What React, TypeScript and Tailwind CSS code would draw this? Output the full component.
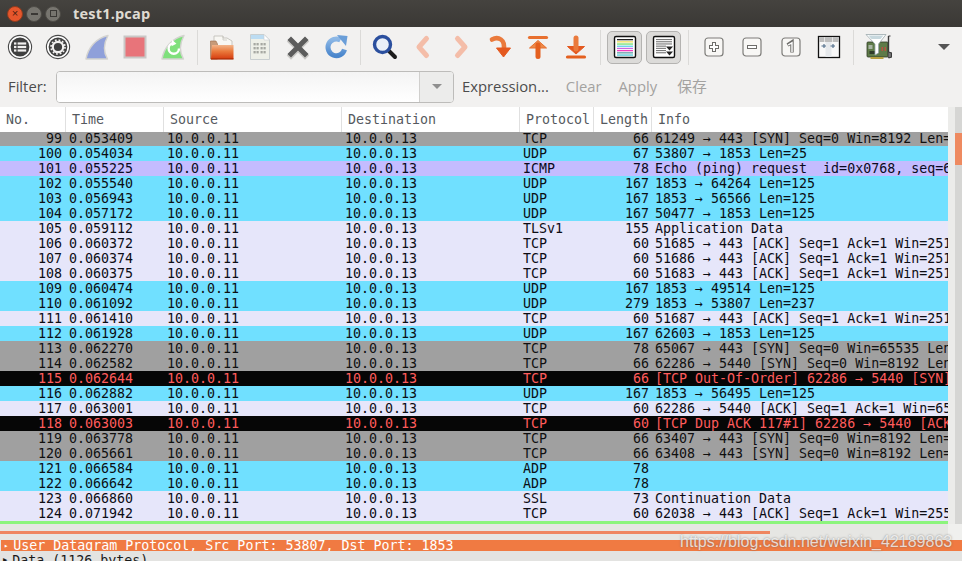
import React from "react";

type Kind = "grey" | "blue" | "purple" | "lav" | "black";
const rows: [number, string, string, number, string, Kind][] = [
  [99, "0.053409", "TCP", 66, "61249 → 443 [SYN] Seq=0 Win=8192 Len=4", "grey"],
  [100, "0.054034", "UDP", 67, "53807 → 1853 Len=25", "blue"],
  [101, "0.055225", "ICMP", 78, "Echo (ping) request  id=0x0768, seq=6", "purple"],
  [102, "0.055540", "UDP", 167, "1853 → 64264 Len=125", "blue"],
  [103, "0.056943", "UDP", 167, "1853 → 56566 Len=125", "blue"],
  [104, "0.057172", "UDP", 167, "50477 → 1853 Len=125", "blue"],
  [105, "0.059112", "TLSv1", 155, "Application Data", "lav"],
  [106, "0.060372", "TCP", 60, "51685 → 443 [ACK] Seq=1 Ack=1 Win=251", "lav"],
  [107, "0.060374", "TCP", 60, "51686 → 443 [ACK] Seq=1 Ack=1 Win=251", "lav"],
  [108, "0.060375", "TCP", 60, "51683 → 443 [ACK] Seq=1 Ack=1 Win=251", "lav"],
  [109, "0.060474", "UDP", 167, "1853 → 49514 Len=125", "blue"],
  [110, "0.061092", "UDP", 279, "1853 → 53807 Len=237", "blue"],
  [111, "0.061410", "TCP", 60, "51687 → 443 [ACK] Seq=1 Ack=1 Win=251", "lav"],
  [112, "0.061928", "UDP", 167, "62603 → 1853 Len=125", "blue"],
  [113, "0.062270", "TCP", 78, "65067 → 443 [SYN] Seq=0 Win=65535 Len=0", "grey"],
  [114, "0.062582", "TCP", 66, "62286 → 5440 [SYN] Seq=0 Win=8192 Len=0", "grey"],
  [115, "0.062644", "TCP", 66, "[TCP Out-Of-Order] 62286 → 5440 [SYN] Seq", "black"],
  [116, "0.062882", "UDP", 167, "1853 → 56495 Len=125", "blue"],
  [117, "0.063001", "TCP", 60, "62286 → 5440 [ACK] Seq=1 Ack=1 Win=65", "lav"],
  [118, "0.063003", "TCP", 60, "[TCP Dup ACK 117#1] 62286 → 5440 [ACK] Seq", "black"],
  [119, "0.063778", "TCP", 66, "63407 → 443 [SYN] Seq=0 Win=8192 Len=0", "grey"],
  [120, "0.065661", "TCP", 66, "63408 → 443 [SYN] Seq=0 Win=8192 Len=0", "grey"],
  [121, "0.066584", "ADP", 78, "", "blue"],
  [122, "0.066642", "ADP", 78, "", "blue"],
  [123, "0.066860", "SSL", 73, "Continuation Data", "lav"],
  [124, "0.071942", "TCP", 60, "62038 → 443 [ACK] Seq=1 Ack=1 Win=255", "lav"],
];

const kindClass: Record<Kind, string> = {
  grey: "bg-[#a0a0a0] text-[#101010]",
  blue: "bg-[#70e0ff] text-[#0a0f14]",
  purple: "bg-[#c4bcff] text-[#0a0a20]",
  lav: "bg-[#e6e6fa] text-[#0c0c14]",
  black: "bg-[#060606] text-[#ff5c5c]",
};

function Svg({ children, w = 28 }: { children: React.ReactNode; w?: number }) {
  return (
    <svg width={w} height={28} viewBox={`0 0 ${w} 28`} className="block">
      <defs>
        <linearGradient id="folderFront" x1="0" y1="0" x2="0" y2="1">
          <stop offset="0" stopColor="#f2b48a" />
          <stop offset="0.45" stopColor="#ea7a3c" />
          <stop offset="1" stopColor="#d63c10" />
        </linearGradient>
        <linearGradient id="reloadBlue" x1="0" y1="0" x2="0" y2="1">
          <stop offset="0" stopColor="#8db8e6" />
          <stop offset="1" stopColor="#4a86cc" />
        </linearGradient>
      </defs>
      {children}
    </svg>
  );
}

const Fin = ({ fill }: { fill: string }) => (
  <path d="M3 26 C5 15 13 5 25 2.5 C21 10 20 18.5 24.5 26 Z" fill={fill} stroke="#d4d3d0" strokeWidth="1.4" strokeLinejoin="round" />
);

const icons: Record<string, React.ReactNode> = {
  list: (
    <Svg>
      <circle cx="14" cy="14" r="11.6" fill="#fff" stroke="#4a4a4a" strokeWidth="1.1" />
      <circle cx="14" cy="14" r="9.4" fill="#3f3f3f" />
      <g fill="#f2f1f0">
        <rect x="8" y="9.4" width="2.4" height="2.2" />
        <rect x="8" y="12.9" width="2.4" height="2.2" />
        <rect x="8" y="16.4" width="2.4" height="2.2" />
        <rect x="11.6" y="9.4" width="8.6" height="2.2" />
        <rect x="11.6" y="12.9" width="8.6" height="2.2" />
        <rect x="11.6" y="16.4" width="8.6" height="2.2" />
      </g>
    </Svg>
  ),
  gear: (
    <Svg>
      <circle cx="14" cy="14" r="11.6" fill="#fff" stroke="#4a4a4a" strokeWidth="1.1" />
      <circle cx="14" cy="14" r="9.4" fill="#3f3f3f" />
      <circle cx="14" cy="14" r="5.2" fill="none" stroke="#f2f1f0" strokeWidth="2.2" />
      <circle cx="14" cy="14" r="7" fill="none" stroke="#f2f1f0" strokeWidth="1.6" strokeDasharray="1.8 1.9" />
    </Svg>
  ),
  fin: (
    <Svg>
      <Fin fill="#8fa0da" />
    </Svg>
  ),
  stop: (
    <Svg>
      <rect x="3.5" y="3.5" width="21" height="21" fill="#e8747a" stroke="#c9c8c6" strokeWidth="2" />
    </Svg>
  ),
  refin: (
    <Svg>
      <Fin fill="#7fe07c" />
      <path d="M20 15.5 a5.2 5.2 0 1 1 -5.2 -5.2" fill="none" stroke="#fff" strokeWidth="2.4" />
      <path d="M12.6 7 L17.5 10.3 L13 13.5 Z" fill="#fff" transform="rotate(8 15 10)" />
    </Svg>
  ),
  open: (
    <Svg>
      <path d="M6 3 H15 V5 H19 L24 8 V16 H6 Z" fill="#f8f7f3" stroke="#bdbbb4" strokeWidth="0.8" />
      <path d="M15 3 L15 7 L19 7" fill="none" stroke="#c8c6c0" strokeWidth="0.8" />
      <path d="M2.5 8 H8 L9.5 11 V26 H2.5 Z" fill="#c79a78" stroke="#9c6d4c" strokeWidth="0.6" />
      <path d="M4 12 H25.5 V26 H3 Z" fill="url(#folderFront)" />
      <path d="M3 26 H25.5" stroke="#a62c08" strokeWidth="1.2" />
    </Svg>
  ),
  file: (
    <Svg>
      <path d="M4.5 1.5 H18 L23.5 7 V26.5 H4.5 Z" fill="#eef0e8" stroke="#c9cfd0" />
      <path d="M5 2 H18 V6 H5 Z" fill="#bcdcf2" />
      <path d="M18 1.5 L23.5 7 H18 Z" fill="#fff" stroke="#c9cfd0" strokeWidth="0.6" />
      <g fill="#a6a8a2">
        {[10, 14, 18].map((y) =>
          [7.5, 10.5, 14.5, 17.5].map((x) => <rect key={`${x}-${y}`} x={x} y={y} width="2.2" height="2.4" />)
        )}
      </g>
    </Svg>
  ),
  close: (
    <Svg>
      <path d="M7 7 L21 21 M21 7 L7 21" stroke="#c9c8c5" strokeWidth="6" strokeLinecap="square" transform="translate(0 1.4)" />
      <path d="M7 7 L21 21 M21 7 L7 21" stroke="#5c5c5c" strokeWidth="5" strokeLinecap="square" />
    </Svg>
  ),
  reload: (
    <Svg>
      <path d="M21.5 16.5 A8.4 8.4 0 1 1 17.5 7" fill="none" stroke="url(#reloadBlue)" strokeWidth="5" />
      <path d="M14 2 L24.5 3 L23 13 Z" fill="#6a9ed8" />
    </Svg>
  ),
  search: (
    <Svg>
      <path d="M17 17 L24 24" stroke="#1c1c1c" strokeWidth="4" strokeLinecap="round" />
      <circle cx="11.5" cy="11.5" r="8" fill="#eaf0f8" stroke="#2b4f9e" strokeWidth="3.4" />
    </Svg>
  ),
  prev: (
    <Svg>
      <path d="M17.5 5.5 L10 14 L17.5 22.5" fill="none" stroke="#f4bda8" strokeWidth="5" strokeLinejoin="round" strokeLinecap="round" />
    </Svg>
  ),
  next: (
    <Svg>
      <path d="M10.5 5.5 L18 14 L10.5 22.5" fill="none" stroke="#f4bda8" strokeWidth="5" strokeLinejoin="round" strokeLinecap="round" />
    </Svg>
  ),
  jump: (
    <Svg>
      <path d="M6 6.5 C12 3 20 6.5 17.5 17" fill="none" stroke="#ea7a3c" strokeWidth="4.6" strokeLinecap="round" />
      <path d="M10.5 15 L24.5 15 L17.5 24 Z" fill="#e4591f" stroke="#e4591f" strokeWidth="1" strokeLinejoin="round" />
    </Svg>
  ),
  top: (
    <Svg>
      <path d="M5.5 4.5 H22.5" stroke="#e8702f" strokeWidth="3.2" strokeLinecap="round" />
      <path d="M14 7.5 L22.5 15 H5.5 Z" fill="#ec8a4a" stroke="#e8702f" strokeLinejoin="round" />
      <path d="M14 12 V23.5" stroke="#e4601f" strokeWidth="5" strokeLinecap="round" />
    </Svg>
  ),
  bottom: (
    <Svg>
      <path d="M5.5 24 H22.5" stroke="#e4601f" strokeWidth="3.2" strokeLinecap="round" />
      <path d="M14 21 L22.5 13.5 H5.5 Z" fill="#e4591f" stroke="#e4591f" strokeLinejoin="round" />
      <path d="M14 5 V16" stroke="#ea7a3c" strokeWidth="5" strokeLinecap="round" />
    </Svg>
  ),
  color: (
    <Svg>
      <rect x="3.5" y="3.5" width="21" height="21" rx="1.5" fill="#fff" stroke="#111" strokeWidth="1.4" />
      {["#222", "#f0e060", "#78e070", "#60d0e8", "#c868e0", "#f040c0", "#60a0a8", "#50c8d8"].map((c, i) => (
        <rect key={i} x="6" y={6 + i * 2.2} width="16" height="1.3" fill={c} />
      ))}
    </Svg>
  ),
  auto: (
    <Svg>
      <rect x="3.5" y="3.5" width="21" height="21" rx="1.5" fill="#fff" stroke="#111" strokeWidth="1.4" />
      {[6, 8.2, 10.4, 12.6, 14.8, 17, 19.2].map((y) => (
        <rect key={y} x="6" y={y} width={y > 11 ? 10 : 16} height="1.1" fill="#777" />
      ))}
      <path d="M16 13.5 H23 L19.5 17.5 Z M16 18.5 H23 L19.5 22.5 Z" fill="#222" />
    </Svg>
  ),
  zin: (
    <Svg>
      <rect x="5" y="5" width="18" height="18" rx="3" fill="#f8f7f5" stroke="#7e7d7a" strokeWidth="1.2" />
      <path d="M14 9 V19 M9 14 H19" stroke="#6e6d6a" strokeWidth="4" />
      <path d="M14 10 V18 M10 14 H18" stroke="#fff" strokeWidth="2" />
    </Svg>
  ),
  zout: (
    <Svg>
      <rect x="5" y="5" width="18" height="18" rx="3" fill="#f8f7f5" stroke="#7e7d7a" strokeWidth="1.2" />
      <path d="M9 14 H19" stroke="#6e6d6a" strokeWidth="4" />
      <path d="M10 14 H18" stroke="#fff" strokeWidth="2" />
    </Svg>
  ),
  zone: (
    <Svg>
      <rect x="5" y="5" width="18" height="18" rx="3" fill="#f8f7f5" stroke="#7e7d7a" strokeWidth="1.2" />
      <path d="M10.5 12 L15 9 V19.5" fill="none" stroke="#6e6d6a" strokeWidth="3.4" />
      <path d="M11 12 L15 9.8 V19" fill="none" stroke="#fff" strokeWidth="1.4" />
    </Svg>
  ),
  cols: (
    <Svg>
      <rect x="3.5" y="3.5" width="21" height="21" fill="#f8f8f8" stroke="#111" strokeWidth="1.3" />
      <rect x="4.2" y="4.2" width="19.6" height="4.8" fill="#bdbdbd" />
      <path d="M9.5 4.2 V9 M17.5 4.2 V9" stroke="#e4e4e4" strokeWidth="1" />
      <rect x="10.5" y="9" width="6" height="15" fill="#e6e9ec" />
      <path d="M6.5 13 H11 M9 11 V15 M15.5 13 H20 M18 11 V15" stroke="#4c6a88" strokeWidth="1.1" />
    </Svg>
  ),
  capture: (
    <Svg w={30}>
      <g transform="translate(1.5 0)">
        <rect x="3.5" y="9" width="21" height="15" rx="1" fill="#5e7a48" stroke="#2e3a24" strokeWidth="0.8" />
        <rect x="5" y="12" width="4" height="4" fill="#a8b4a4" />
        <rect x="18" y="14" width="1.5" height="4" fill="#b85040" />
        <rect x="21" y="14" width="1.5" height="4" fill="#b85040" />
        <rect x="6" y="18" width="6" height="3" fill="#2f3c28" />
        <rect x="7" y="24" width="13" height="2" fill="#b8a040" />
        <path d="M25 3 V25" stroke="#3a3a3a" strokeWidth="1.4" />
        <path d="M25 3 h2 M25 19 l3 1 v4 l-3 1" stroke="#3a3a3a" strokeWidth="1.2" fill="#777" />
        <path d="M2.5 1.5 H22.5 L15 11 V20 L11.5 22 V11 Z" fill="#fff" stroke="#9aa8ac" strokeWidth="0.8" />
        <path d="M5 2.5 H20 L17 6 H8 Z" fill="#c7d8de" />
      </g>
    </Svg>
  ),
};

const Btn = ({ icon }: { icon: string }) => (
  <div className="w-[38.3px] h-[34px] flex items-center justify-center shrink-0">{icons[icon]}</div>
);
const Active = ({ icon }: { icon: string }) => (
  <div className="w-[39px] flex justify-center shrink-0">
    <div className="w-[35px] h-[33px] flex items-center justify-center rounded-[5px] bg-[#dcdbd9] border border-[#b4b3b1]">
      {icons[icon]}
    </div>
  </div>
);
const Sep = () => (
  <div className="w-[10px] h-[35px] flex justify-center shrink-0">
    <div className="w-px h-full bg-[#dbdad8]" />
  </div>
);

const Header = ({ label, cls }: { label: string; cls: string }) => (
  <div className={`${cls} shrink-0 h-full flex items-center pl-[6px] border-r border-[#e0e0e0] last:border-r-0 text-[#55595e] overflow-hidden whitespace-pre`}>
    {label}
  </div>
);

export default function App() {
  const mono = "font-['DejaVu_Sans_Mono',monospace] text-[13.3px]";
  return (
    <div className="relative w-[962px] h-[561px] overflow-hidden flex flex-col bg-[#f2f1f0] font-['Open_Sans','Noto_Sans_CJK_SC',sans-serif]">
      {/* title bar */}
      <div className="h-[27px] shrink-0 flex items-center bg-gradient-to-b from-[#45433f] to-[#3a3835] pl-[7px]">
        <div className="w-4 h-4 rounded-full bg-[#e5562c] border border-[#8f3b1e] flex items-center justify-center text-[11px] leading-none text-[#4a2010] font-['Liberation_Sans',sans-serif]">
          ×
        </div>
        <div className="w-4 h-4 ml-[3px] rounded-full bg-[#77756f] border border-[#4d4b46] flex items-center justify-center">
          <div className="w-[7px] h-[2px] bg-[#3a3835]" />
        </div>
        <div className="w-4 h-4 ml-[3px] rounded-full bg-[#77756f] border border-[#4d4b46] flex items-center justify-center">
          <div className="w-[7px] h-[7px] border border-[#3a3835]" />
        </div>
        <div className="ml-[12px] text-[14.5px] font-bold text-[#dfdbd2] tracking-[0.2px]">test1.pcap</div>
      </div>

      {/* toolbar */}
      <div className="h-[40px] shrink-0 flex items-center pl-px">
        <Btn icon="list" />
        <Btn icon="gear" />
        <Btn icon="fin" />
        <Btn icon="stop" />
        <Btn icon="refin" />
        <Sep />
        <Btn icon="open" />
        <Btn icon="file" />
        <Btn icon="close" />
        <Btn icon="reload" />
        <Sep />
        <Btn icon="search" />
        <Btn icon="prev" />
        <Btn icon="next" />
        <Btn icon="jump" />
        <Btn icon="top" />
        <Btn icon="bottom" />
        <Sep />
        <Active icon="color" />
        <Active icon="auto" />
        <Sep />
        <div className="w-[1.5px] shrink-0" />
        <Btn icon="zin" />
        <Btn icon="zout" />
        <Btn icon="zone" />
        <Btn icon="cols" />
        <Sep />
        <Btn icon="capture" />
        <div className="ml-[42px] w-0 h-0 border-l-[6px] border-r-[6px] border-t-[6px] border-l-transparent border-r-transparent border-t-[#555]" />
      </div>

      {/* filter bar */}
      <div className="h-[39px] shrink-0 flex items-center pl-[8px] text-[14.8px]">
        <span className="w-[48px] text-[#4c4c4c]">Filter:</span>
        <div className="w-[398px] h-[32px] flex rounded-[4px] border border-[#bdbcba] bg-white overflow-hidden">
          <div className="flex-1 bg-gradient-to-b from-[#f4f4f4] to-white" />
          <div className="w-[34px] border-l border-[#d0cfcd] bg-[#ececeb] flex items-center justify-center">
            <div className="w-0 h-0 border-l-[5px] border-r-[5px] border-t-[5px] border-l-transparent border-r-transparent border-t-[#8f8f8f]" />
          </div>
        </div>
        <span className="ml-[8px] text-[#4c4c4c]">Expression...</span>
        <span className="ml-[17px] text-[#a3a2a0]">Clear</span>
        <span className="ml-[17px] text-[#a3a2a0]">Apply</span>
        <span className="ml-[20px] text-[#a3a2a0]">保存</span>
      </div>

      {/* packet list */}
      <div className="flex-1 min-h-0 flex pt-px">
        <div className={`w-[948px] shrink-0 flex flex-col ${mono}`}>
          <div className="h-[25px] shrink-0 flex bg-white">
            <Header label="No." cls="w-[66px]" />
            <Header label="Time" cls="w-[98px]" />
            <Header label="Source" cls="w-[178px]" />
            <Header label="Destination" cls="w-[178px]" />
            <Header label="Protocol" cls="w-[74px]" />
            <Header label="Length" cls="w-[58px]" />
            <Header label="Info" cls="flex-1" />
          </div>
          <div className="h-[389px] shrink-0 flex flex-col justify-end overflow-hidden">
            {rows.map(([no, t, proto, len, info, k]) => (
              <div key={no} className={`h-[15px] shrink-0 flex leading-[15px] whitespace-pre ${kindClass[k]}`}>
                <div className="w-[65px] shrink-0 text-right pr-[3px]">{no}</div>
                <div className="w-[98px] shrink-0 pl-[4px]">{t}</div>
                <div className="w-[178px] shrink-0 pl-[4px]">10.0.0.11</div>
                <div className="w-[179px] shrink-0 pl-[4px]">10.0.0.13</div>
                <div className="w-[74px] shrink-0 pl-[3px]">{proto}</div>
                <div className="w-[58px] shrink-0 text-right pr-[3px]">{len}</div>
                <div className="flex-1 min-w-0 pl-[3px] overflow-hidden">{info}</div>
              </div>
            ))}
          </div>
          <div className="h-[3px] shrink-0 bg-[#8cf47c]" />
        </div>
        <div className="w-[14px] shrink-0 flex justify-end bg-[#ececea]">
          <div className="w-[7px] h-full bg-[#d6d6d4] pt-[26px]">
            <div className="h-[32px] bg-[#ee8a60]" />
          </div>
        </div>
      </div>

      {/* details pane */}
      <div className={`h-[37px] shrink-0 flex flex-col ${mono} bg-[#e6e6e3]`}>
        <div className="h-[16px] shrink-0 flex">
          <div className="w-[948px] shrink-0 flex flex-col">
            <div className="h-[7px] shrink-0" />
            <div className="h-[3px] w-[770px] shrink-0 bg-[#ef8660]" />
          </div>
          <div className="flex-1 bg-[#f0f0ee]" />
        </div>
        <div className="h-[11px] shrink-0 flex items-start bg-[#f07a42] text-white ml-px pl-[3px] overflow-hidden leading-[12px] whitespace-pre">
          <span className="text-[7px] mr-[5px]">▸</span>
          <span>User Datagram Protocol, Src Port: 53807, Dst Port: 1853</span>
        </div>
        <div className="h-[10px] shrink-0 overflow-hidden flex pl-[3px] bg-[#e3e3e1] text-[#1a1a1a] leading-[20px] whitespace-pre">
          <span className="text-[7px] mr-[5px] leading-[18px]">▶</span>
          <span>Data (1126 bytes)</span>
        </div>
      </div>

      {/* watermark */}
      <div className="absolute left-[680px] top-[533px] text-[16px] leading-[18px] text-white/75 font-['Liberation_Sans',sans-serif] [text-shadow:0_0_2px_rgba(90,90,90,0.7)] whitespace-pre">
        https://blog.csdn.net/weixin_42189863
      </div>
    </div>
  );
}
